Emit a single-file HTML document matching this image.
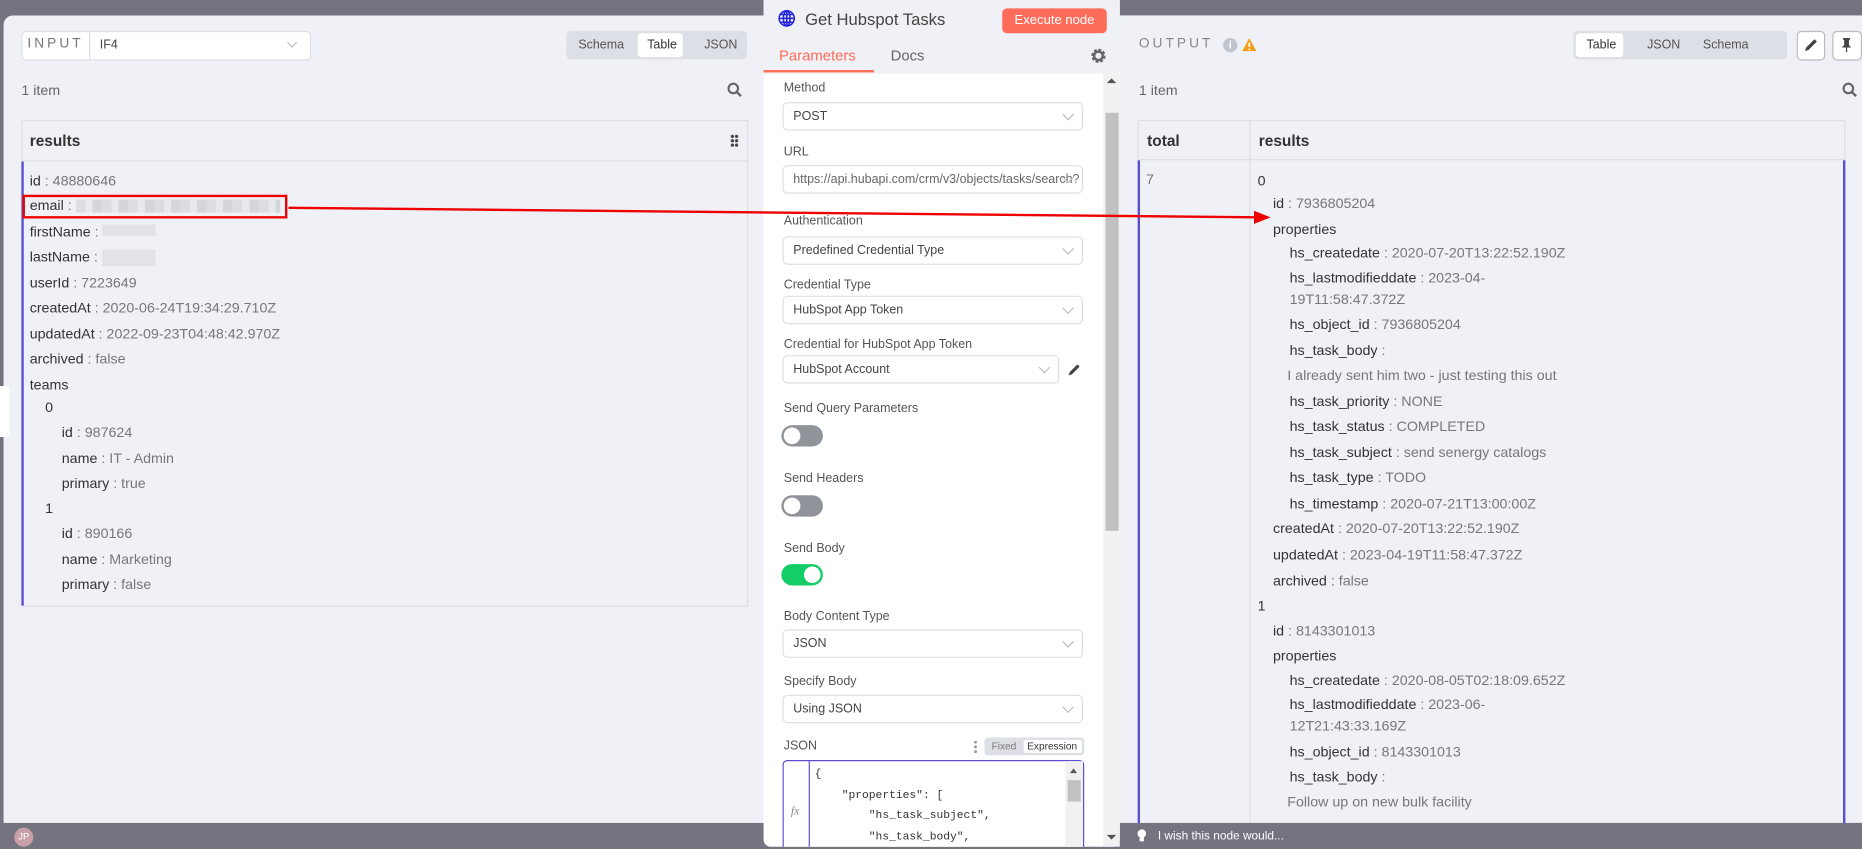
<!DOCTYPE html>
<html><head><meta charset="utf-8"><style>
*{box-sizing:border-box;margin:0;padding:0}
html,body{width:1862px;height:849px;overflow:hidden;background:#75737f}
#w{position:absolute;left:0;top:0;width:1568px;height:715px;transform:scale(1.1875);transform-origin:0 0;font-family:"Liberation Sans",sans-serif;color:#555}
.a{position:absolute;white-space:nowrap}
.k{color:#333}
.v{color:#777}
.r{position:absolute;font-size:12px;white-space:nowrap}
.lbl{position:absolute;left:660px;font-size:10.5px;color:#555}
.sel{position:absolute;left:659px;width:253px;height:24px;border:1px solid #dcdfe6;border-radius:4px;background:#fff;font-size:10.5px;color:#444;padding:5px 8px;white-space:nowrap;overflow:hidden}
.sel:after{content:"";position:absolute;right:8px;top:6px;width:6px;height:6px;border-right:1px solid #bbb;border-bottom:1px solid #bbb;transform:rotate(45deg)}
.tg{position:absolute;left:658px;width:35px;height:18px;border-radius:9px;background:#909399}
.tg:after{content:"";position:absolute;left:2px;top:2px;width:14px;height:14px;border-radius:50%;background:#fff}
.tg.on{background:#13ce66}.tg.on:after{left:19px}
</style></head><body><div id="w">
<div class="a" style="left:3px;top:13px;width:650px;height:680px;background:#f0f1f6;border-radius:8px 0 0 0"></div>
<div class="a" style="left:0;top:325px;width:8px;height:43px;background:#fff;border-radius:0 4px 4px 0"></div>
<div class="a" style="left:930px;top:13px;width:638px;height:680px;background:#f0f1f6"></div>

<div class="a" style="left:18px;top:26px;width:244px;height:25px;background:#fff;border:1px solid #dcdfe6;border-radius:4px"></div>
<div class="a" style="left:75px;top:27px;width:1px;height:23px;background:#dcdfe6"></div>
<div class="a" style="left:23px;top:31px;font-size:11.5px;letter-spacing:2.6px;color:#777">INPUT</div>
<div class="a" style="left:84px;top:32px;font-size:10.5px;color:#444">IF4</div>
<div class="a" style="left:243px;top:33px;width:6px;height:6px;border-right:1px solid #bbb;border-bottom:1px solid #bbb;transform:rotate(45deg)"></div>
<div class="a" style="left:477px;top:26px;width:152px;height:24px;background:#dcdfe6;border-radius:4px"></div>
<div class="a" style="left:537px;top:28px;width:38px;height:20px;background:#fff;border-radius:3px"></div>
<div class="a" style="left:487px;top:32px;font-size:10.5px;color:#555">Schema</div>
<div class="a" style="left:545px;top:32px;font-size:10.5px;color:#333">Table</div>
<div class="a" style="left:593px;top:32px;font-size:10.5px;color:#555">JSON</div>
<div class="a" style="left:18px;top:69px;font-size:12px;color:#666">1 item</div>
<svg class="a" style="left:612px;top:69px" width="13" height="13" viewBox="0 0 13 13"><circle cx="5.5" cy="5.5" r="4" stroke="#666" stroke-width="1.8" fill="none"/><path d="M8.5 8.5L12 12" stroke="#666" stroke-width="2"/></svg>

<div class="a" style="left:18px;top:101px;width:612px;height:410px;border:1px solid #dcdfe6;border-left:none"></div>
<div class="a" style="left:18px;top:135px;width:612px;height:1px;background:#dcdfe6"></div>
<div class="a" style="left:18px;top:101px;width:1px;height:34px;background:#dcdfe6"></div>
<div class="a" style="left:18px;top:136px;width:2px;height:374px;background:#5b4fd1"></div>
<div class="a" style="left:25px;top:111px;font-size:13px;font-weight:bold;color:#333">results</div>
<div class="a" style="left:615px;top:113px;width:7px;height:11px;background:radial-gradient(circle,#444 1.2px,transparent 1.6px) 0 0/3.5px 3.7px"></div>
<div class="r" style="left:25px;top:145px"><span class="k">id</span><span class="v"> : 48880646</span></div>
<div class="r" style="left:25px;top:166px"><span class="k">email</span><span class="v"> : </span><span style="display:inline-block;width:172px;height:11px;background:repeating-linear-gradient(90deg,#dcdde3 0 8px,#e8e9ee 8px 14px,#d4d6dc 14px 22px);vertical-align:middle"></span></div>
<div class="a" style="left:19px;top:164px;width:223px;height:20px;border:2px solid #e00"></div>
<div class="r" style="left:25px;top:188px"><span class="k">firstName</span><span class="v"> : </span><span style="display:inline-block;width:45px;height:10px;background:#e2e3e8"></span></div>
<div class="r" style="left:25px;top:209px"><span class="k">lastName</span><span class="v"> : </span><span style="display:inline-block;width:45px;height:14px;background:#e2e3e8;vertical-align:middle"></span></div>
<div class="r" style="left:25px;top:231px"><span class="k">userId</span><span class="v"> : 7223649</span></div>
<div class="r" style="left:25px;top:252px"><span class="k">createdAt</span><span class="v"> : 2020-06-24T19:34:29.710Z</span></div>
<div class="r" style="left:25px;top:274px"><span class="k">updatedAt</span><span class="v"> : 2022-09-23T04:48:42.970Z</span></div>
<div class="r" style="left:25px;top:295px"><span class="k">archived</span><span class="v"> : false</span></div>
<div class="r" style="left:25px;top:317px"><span class="k">teams</span></div>
<div class="r" style="left:38px;top:336px"><span class="k">0</span></div>
<div class="r" style="left:52px;top:357px"><span class="k">id</span><span class="v"> : 987624</span></div>
<div class="r" style="left:52px;top:379px"><span class="k">name</span><span class="v"> : IT - Admin</span></div>
<div class="r" style="left:52px;top:400px"><span class="k">primary</span><span class="v"> : true</span></div>
<div class="r" style="left:38px;top:421px"><span class="k">1</span></div>
<div class="r" style="left:52px;top:442px"><span class="k">id</span><span class="v"> : 890166</span></div>
<div class="r" style="left:52px;top:464px"><span class="k">name</span><span class="v"> : Marketing</span></div>
<div class="r" style="left:52px;top:485px"><span class="k">primary</span><span class="v"> : false</span></div>

<div class="a" style="left:959px;top:31px;font-size:11.5px;letter-spacing:2.6px;color:#888">OUTPUT</div>
<div class="a" style="left:1030px;top:32px;width:12px;height:12px;border-radius:50%;background:#c0c4cc;color:#fff;font-size:9px;text-align:center;line-height:12px;font-weight:bold">i</div>
<svg class="a" style="left:1045px;top:31px" width="14" height="13" viewBox="0 0 14 13"><path d="M7 1L13 12H1Z" fill="#f0a020"/><path d="M7 5v3.5M7 10v1" stroke="#fff" stroke-width="1.5"/></svg>
<div class="a" style="left:1325px;top:26px;width:180px;height:24px;background:#dcdfe6;border-radius:4px"></div>
<div class="a" style="left:1327px;top:28px;width:40px;height:20px;background:#fff;border-radius:3px"></div>
<div class="a" style="left:1336px;top:32px;font-size:10.5px;color:#333">Table</div>
<div class="a" style="left:1387px;top:32px;font-size:10.5px;color:#555">JSON</div>
<div class="a" style="left:1434px;top:32px;font-size:10.5px;color:#555">Schema</div>
<div class="a" style="left:1513px;top:26px;width:24px;height:25px;background:#fff;border:1px solid #bbb;border-radius:4px"></div>
<svg class="a" style="left:1518px;top:31px" width="14" height="14" viewBox="0 0 14 14"><path d="M2 12l1-3 7-7 2 2-7 7z" fill="#444"/></svg>
<div class="a" style="left:1543px;top:26px;width:25px;height:25px;background:#fff;border:1px solid #bbb;border-radius:4px"></div>
<svg class="a" style="left:1549px;top:31px" width="12" height="14" viewBox="0 0 12 14"><path d="M3 1h6v1l-1 1v4l2 2H2l2-2V3L3 2zM5.5 9h1v4h-1z" fill="#444"/></svg>
<div class="a" style="left:959px;top:69px;font-size:12px;color:#666">1 item</div>
<svg class="a" style="left:1551px;top:69px" width="13" height="13" viewBox="0 0 13 13"><circle cx="5.5" cy="5.5" r="4" stroke="#666" stroke-width="1.8" fill="none"/><path d="M8.5 8.5L12 12" stroke="#666" stroke-width="2"/></svg>
<div class="a" style="left:958px;top:101px;width:596px;height:34px;border:1px solid #dcdfe6"></div>
<div class="a" style="left:1052px;top:101px;width:1px;height:600px;background:#dcdfe6"></div>
<div class="a" style="left:958px;top:135px;width:2px;height:560px;background:#5b4fd1"></div>
<div class="a" style="left:1552px;top:135px;width:2px;height:560px;background:#5b4fd1"></div>
<div class="a" style="left:966px;top:111px;font-size:13px;font-weight:bold;color:#333">total</div>
<div class="a" style="left:1060px;top:111px;font-size:13px;font-weight:bold;color:#333">results</div>
<div class="r" style="left:965px;top:144px"><span class="v">7</span></div>
<div class="r" style="left:1059px;top:145px"><span class="k">0</span></div>
<div class="r" style="left:1072px;top:164px"><span class="k">id</span><span class="v"> : 7936805204</span></div>
<div class="r" style="left:1072px;top:186px"><span class="k">properties</span></div>
<div class="r" style="left:1086px;top:206px"><span class="k">hs_createdate</span><span class="v"> : 2020-07-20T13:22:52.190Z</span></div>
<div class="r" style="left:1086px;top:227px"><span class="k">hs_lastmodifieddate</span><span class="v"> : 2023-04-</span></div>
<div class="r" style="left:1086px;top:245px"><span class="v">19T11:58:47.372Z</span></div>
<div class="r" style="left:1086px;top:266px"><span class="k">hs_object_id</span><span class="v"> : 7936805204</span></div>
<div class="r" style="left:1086px;top:288px"><span class="k">hs_task_body</span><span class="v"> :</span></div>
<div class="r" style="left:1084px;top:309px"><span class="v">I already sent him two - just testing this out</span></div>
<div class="r" style="left:1086px;top:331px"><span class="k">hs_task_priority</span><span class="v"> : NONE</span></div>
<div class="r" style="left:1086px;top:352px"><span class="k">hs_task_status</span><span class="v"> : COMPLETED</span></div>
<div class="r" style="left:1086px;top:374px"><span class="k">hs_task_subject</span><span class="v"> : send senergy catalogs</span></div>
<div class="r" style="left:1086px;top:395px"><span class="k">hs_task_type</span><span class="v"> : TODO</span></div>
<div class="r" style="left:1086px;top:417px"><span class="k">hs_timestamp</span><span class="v"> : 2020-07-21T13:00:00Z</span></div>
<div class="r" style="left:1072px;top:438px"><span class="k">createdAt</span><span class="v"> : 2020-07-20T13:22:52.190Z</span></div>
<div class="r" style="left:1072px;top:460px"><span class="k">updatedAt</span><span class="v"> : 2023-04-19T11:58:47.372Z</span></div>
<div class="r" style="left:1072px;top:482px"><span class="k">archived</span><span class="v"> : false</span></div>
<div class="r" style="left:1059px;top:503px"><span class="k">1</span></div>
<div class="r" style="left:1072px;top:524px"><span class="k">id</span><span class="v"> : 8143301013</span></div>
<div class="r" style="left:1072px;top:545px"><span class="k">properties</span></div>
<div class="r" style="left:1086px;top:566px"><span class="k">hs_createdate</span><span class="v"> : 2020-08-05T02:18:09.652Z</span></div>
<div class="r" style="left:1086px;top:586px"><span class="k">hs_lastmodifieddate</span><span class="v"> : 2023-06-</span></div>
<div class="r" style="left:1086px;top:604px"><span class="v">12T21:43:33.169Z</span></div>
<div class="r" style="left:1086px;top:626px"><span class="k">hs_object_id</span><span class="v"> : 8143301013</span></div>
<div class="r" style="left:1086px;top:647px"><span class="k">hs_task_body</span><span class="v"> :</span></div>
<div class="r" style="left:1084px;top:668px"><span class="v">Follow up on new bulk facility</span></div>

<div class="a" style="left:0;top:693px;width:1568px;height:22px;background:#75737f"></div>
<svg class="a" style="left:957px;top:698px" width="9" height="12" viewBox="0 0 9 12"><circle cx="4.5" cy="4" r="3.6" fill="#fff"/><rect x="2.7" y="7" width="3.6" height="3.5" fill="#fff"/></svg>
<div class="a" style="left:975px;top:699px;font-size:10px;color:#fff">I wish this node would...</div>
<div class="a" style="left:12px;top:697px;width:16px;height:16px;border-radius:50%;background:#c9a0a8;color:#fff;font-size:8px;text-align:center;line-height:16px">JP</div>

<div class="a" style="left:643px;top:0;width:300px;height:713px;background:#fff;border-radius:0 0 6px 6px;overflow:hidden">
 <div class="a" style="left:0;top:0;width:300px;height:62px;background:#f0f1f6"></div>
 <div class="a" style="left:16px;top:640px;width:254px;height:80px;border:1px solid #5b4fd1;border-radius:4px;background:#fff"></div>
 <div class="a" style="left:38px;top:641px;width:1px;height:75px;background:#5b4fd1"></div>
 <div class="a" style="left:23px;top:678px;font-size:10px;font-style:italic;color:#888;font-family:'Liberation Serif',serif">fx</div>
 <div class="a" style="left:254px;top:641px;width:15px;height:75px;background:#f1f1f1"></div>
 <div class="a" style="left:256px;top:657px;width:11px;height:18px;background:#c1c1c1"></div>
 <div class="a" style="left:258px;top:647px;width:0;height:0;border-left:3.5px solid transparent;border-right:3.5px solid transparent;border-bottom:4px solid #555"></div>
 <div class="a" style="left:43px;top:643px;font-family:'Liberation Mono',monospace;font-size:9.5px;color:#333;line-height:17.5px;white-space:pre">{
    "properties": [
        "hs_task_subject",
        "hs_task_body",</div>
</div>
<svg class="a" style="left:655px;top:8px" width="15" height="15" viewBox="0 0 16 16"><g fill="none" stroke="#2222dd" stroke-width="1.4"><circle cx="8" cy="8" r="6.8"/><ellipse cx="8" cy="8" rx="3" ry="6.8"/><path d="M1.2 8h13.6M2.5 4.5h11M2.5 11.5h11M8 1.2v13.6"/></g></svg>
<div class="a" style="left:678px;top:8px;font-size:14px;color:#444">Get Hubspot Tasks</div>
<div class="a" style="left:844px;top:7px;width:88px;height:21px;background:#ff6d5a;border-radius:4px;color:#fff;font-size:11px;text-align:center;line-height:21px">Execute node</div>
<div class="a" style="left:656px;top:40px;font-size:12.5px;color:#ff6d5a">Parameters</div>
<div class="a" style="left:750px;top:40px;font-size:12.5px;color:#666">Docs</div>
<div class="a" style="left:643px;top:59px;width:93px;height:2px;background:#ff6d5a"></div>
<svg class="a" style="left:918px;top:40px" width="14" height="14" viewBox="0 0 14 14"><circle cx="7" cy="7" r="4.5" fill="none" stroke="#666" stroke-width="3" stroke-dasharray="2.2 1.3"/><circle cx="7" cy="7" r="3.6" fill="none" stroke="#666" stroke-width="2"/></svg>
<div class="a" style="left:929px;top:62px;width:14px;height:651px;background:#f1f1f1"></div>
<div class="a" style="left:931px;top:95px;width:11px;height:352px;background:#c1c1c1"></div>
<div class="a" style="left:932px;top:66px;width:0;height:0;border-left:4px solid transparent;border-right:4px solid transparent;border-bottom:4px solid #555"></div>
<div class="a" style="left:932px;top:703px;width:0;height:0;border-left:4px solid transparent;border-right:4px solid transparent;border-top:4px solid #555"></div>

<div class="lbl" style="top:68px">Method</div><div class="sel" style="top:86px">POST</div>
<div class="lbl" style="top:122px">URL</div><div class="sel" style="top:139px;color:#666">https://api.hubapi.com/crm/v3/objects/tasks/search?</div>
<div class="lbl" style="top:180px">Authentication</div><div class="sel" style="top:199px">Predefined Credential Type</div>
<div class="lbl" style="top:234px">Credential Type</div><div class="sel" style="top:249px">HubSpot App Token</div>
<div class="lbl" style="top:284px">Credential for HubSpot App Token</div><div class="sel" style="top:299px;width:233px">HubSpot Account</div>
<svg class="a" style="left:898px;top:305px" width="13" height="13" viewBox="0 0 14 14"><path d="M2 12l1-3 7-7 2 2-7 7z" fill="#444"/></svg>
<div class="lbl" style="top:338px">Send Query Parameters</div><div class="tg" style="top:358px"></div>
<div class="lbl" style="top:397px">Send Headers</div><div class="tg" style="top:417px"></div>
<div class="lbl" style="top:456px">Send Body</div><div class="tg on" style="top:475px"></div>
<div class="lbl" style="top:513px">Body Content Type</div><div class="sel" style="top:530px">JSON</div>
<div class="lbl" style="top:568px">Specify Body</div><div class="sel" style="top:585px">Using JSON</div>
<div class="lbl" style="top:622px">JSON</div>
<div class="a" style="left:820px;top:623px;width:3px;height:12px;background:radial-gradient(circle,#999 1.1px,transparent 1.4px) 0 0/3px 4px"></div>
<div class="a" style="left:829px;top:621px;width:84px;height:15px;background:#dcdfe6;border-radius:3px"></div>
<div class="a" style="left:862px;top:623px;width:49px;height:11px;background:#fff;border-radius:2px"></div>
<div class="a" style="left:835px;top:623px;font-size:8.5px;color:#777">Fixed</div>
<div class="a" style="left:865px;top:623px;font-size:8.5px;color:#333">Expression</div>

<svg class="a" style="left:0;top:0" width="1568" height="715"><path d="M243 175L1058 183" stroke="#e00" stroke-width="2"/><path d="M1070 183.1L1056 177.5L1056 188.5Z" fill="#e00"/></svg>
</div></body></html>
